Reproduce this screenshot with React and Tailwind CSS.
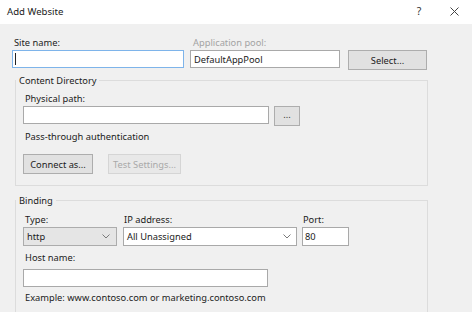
import React from "react";

function Chevron() {
  return (
    <svg width="8" height="5" viewBox="0 0 8 5" className="shrink-0">
      <path d="M0.5 0.5 L4 4 L7.5 0.5" fill="none" stroke="#7a7a7a" strokeWidth="1" />
    </svg>
  );
}

export default function App() {
  return (
    <div className="w-[474px] h-[312px] bg-white flex flex-col overflow-hidden font-['Noto_Sans',sans-serif] text-[9.3px] text-[#1b1b1b]">
      {/* Title bar */}
      <div className="h-[24px] flex items-center pl-[7px] shrink-0">
        <div className="flex-1 text-[9.6px] leading-[14px] -mt-[1px]">Add Website</div>
        <div className="w-[12px] text-center text-[10.5px] leading-[14px] -mt-[2px] text-[#333]">?</div>
        <div className="w-[25px]" />
        <svg width="9" height="9" viewBox="0 0 9 9" className="mr-[15px] -mt-[2px]">
          <path d="M0.5 0.5 L8.5 8.5 M8.5 0.5 L0.5 8.5" stroke="#444" strokeWidth="1" />
        </svg>
      </div>

      {/* Content */}
      <div className="flex-1 bg-[#f0f0f0] mr-[2px] pl-[12px] pt-[12px] flex flex-col">
        {/* Row 1 */}
        <div className="flex items-start">
          <div className="w-[172px] flex flex-col">
            <div className="h-[13px] leading-[13px] pl-[2px]">Site name:</div>
            <div className="mt-[1px] h-[18px] bg-white border border-[#7eb4ea] flex items-center pl-[2px]">
              <div className="w-[1px] h-[12px] bg-[#222]" />
            </div>
          </div>
          <div className="w-[150px] ml-[6px] flex flex-col">
            <div className="h-[13px] leading-[13px] pl-[3px] text-[#a3a3a3]">Application pool:</div>
            <div className="mt-[1px] h-[18px] bg-white border border-[#a9a9a9] flex items-center pl-[3px] leading-[13px]">
              DefaultAppPool
            </div>
          </div>
          <div className="ml-[8px] mt-[14px] w-[79px] h-[20px] bg-[#e1e1e1] border border-[#adadad] flex items-center justify-center leading-[13px]">
            Select...
          </div>
        </div>

        {/* Content Directory */}
        <fieldset className="mt-[4px] ml-[3px] w-[413px] border border-[#dcdcdc] px-0 pb-[11px]">
          <legend className="px-[3px] h-[13px] leading-[13px]">Content Directory</legend>
          <div className="pl-[7px] flex flex-col">
            <div className="mt-[5px] h-[13px] leading-[13px] pl-[2px]">Physical path:</div>
            <div className="mt-[1px] flex items-start">
              <div className="w-[246px] h-[18px] bg-white border border-[#a9a9a9]" />
              <div className="ml-[5px] w-[26px] h-[20px] bg-[#e1e1e1] border border-[#adadad] flex items-center justify-center leading-[10px] pb-[2px] text-[#333]">
                ...
              </div>
            </div>
            <div className="mt-[4px] h-[13px] leading-[13px] pl-[2px]">Pass-through authentication</div>
            <div className="mt-[11px] flex">
              <div className="w-[70px] h-[20px] bg-[#e1e1e1] border border-[#adadad] flex items-center justify-center leading-[13px]">
                Connect as...
              </div>
              <div className="ml-[15px] w-[73px] h-[20px] bg-[#e8e8e8] border border-[#d5d5d5] flex items-center justify-center leading-[13px] text-[#a8a8a8]">
                Test Settings...
              </div>
            </div>
          </div>
        </fieldset>

        {/* Binding */}
        <fieldset className="mt-[8px] ml-[3px] w-[413px] border border-[#dcdcdc] px-0 pb-[20px]">
          <legend className="px-[3px] h-[13px] leading-[13px]">Binding</legend>
          <div className="pl-[7px] flex flex-col">
            <div className="mt-[6px] flex items-start">
              <div className="w-[94px] flex flex-col">
                <div className="h-[13px] leading-[13px] pl-[2px]">Type:</div>
                <div className="mt-[1px] h-[19px] bg-[#e5e5e5] border border-[#acacac] flex items-center pl-[3px] pr-[6px] leading-[13px]">
                  <span className="flex-1">http</span>
                  <Chevron />
                </div>
              </div>
              <div className="w-[174px] ml-[6px] flex flex-col">
                <div className="h-[13px] leading-[13px] pl-[1px]">IP address:</div>
                <div className="mt-[1px] h-[19px] bg-white border border-[#a9a9a9] flex items-center pl-[3px] pr-[5px] leading-[13px]">
                  <span className="flex-1">All Unassigned</span>
                  <Chevron />
                </div>
              </div>
              <div className="w-[47px] ml-[5px] flex flex-col">
                <div className="h-[13px] leading-[13px] pl-[1px]">Port:</div>
                <div className="mt-[1px] h-[19px] bg-white border border-[#a9a9a9] flex items-center pl-[2px] leading-[13px]">
                  80
                </div>
              </div>
            </div>
            <div className="mt-[5px] h-[13px] leading-[13px] pl-[2px]">Host name:</div>
            <div className="mt-[5px] w-[245px] h-[18px] bg-white border border-[#a9a9a9]" />
            <div className="mt-[4px] h-[13px] leading-[13px] pl-[2px]">Example: www.contoso.com or marketing.contoso.com</div>
          </div>
        </fieldset>
      </div>
    </div>
  );
}
